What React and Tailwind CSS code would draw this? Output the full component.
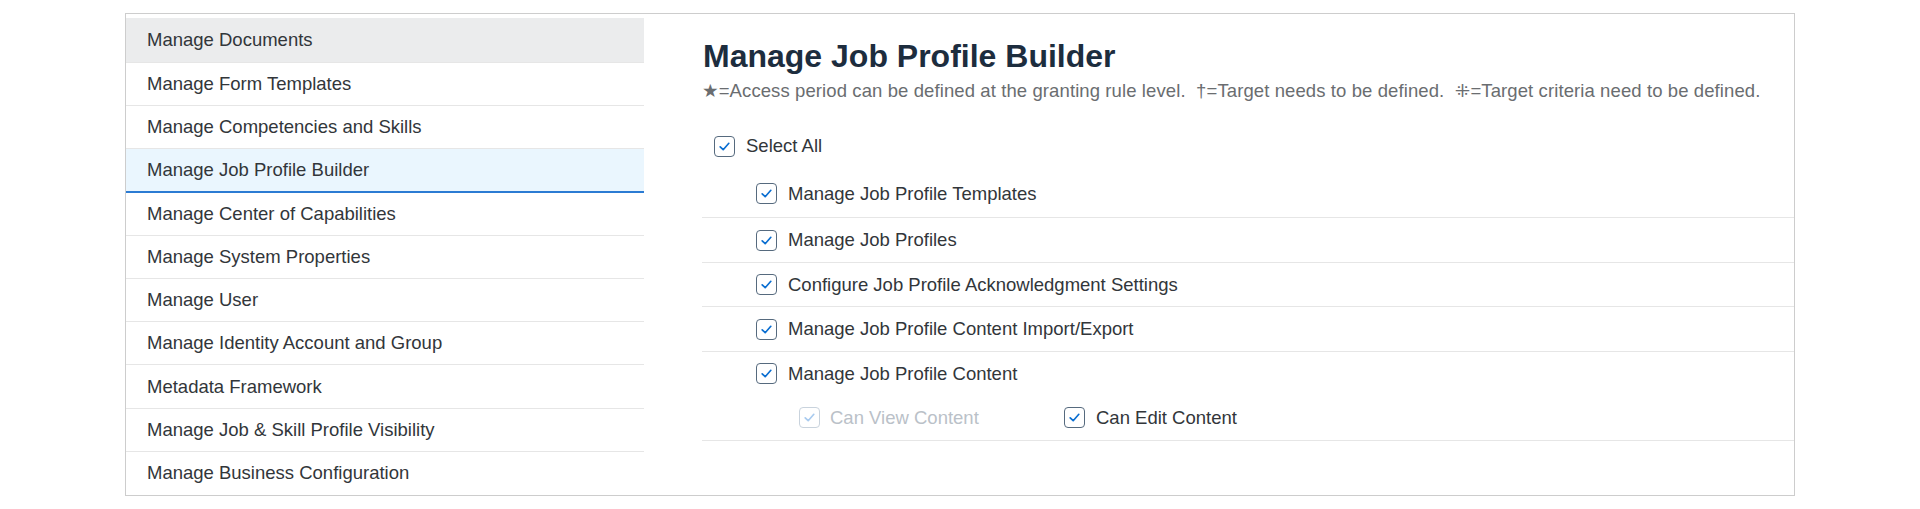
const NAV_ITEMS = [
  'Manage Documents',
  'Manage Form Templates',
  'Manage Competencies and Skills',
  'Manage Job Profile Builder',
  'Manage Center of Capabilities',
  'Manage System Properties',
  'Manage User',
  'Manage Identity Account and Group',
  'Metadata Framework',
  'Manage Job & Skill Profile Visibility',
  'Manage Business Configuration',
]

const PERMISSIONS = [
  'Manage Job Profile Templates',
  'Manage Job Profiles',
  'Configure Job Profile Acknowledgment Settings',
  'Manage Job Profile Content Import/Export',
]

function Checkbox({ disabled = false }) {
  return (
    <span
      className={`w-[21px] h-[21px] flex-shrink-0 rounded-[4px] border-[1.75px] bg-white flex items-center justify-center ${
        disabled ? 'border-[#c9d3dd]' : 'border-[#566a7e]'
      }`}
    >
      <svg width="15" height="15" viewBox="0 0 16 16" fill="none">
        <path
          d="M3.4 8.3 L6.6 11.4 L12.6 4.6"
          stroke={disabled ? '#a9cbef' : '#0a6ed1'}
          strokeWidth="1.8"
          strokeLinecap="round"
          strokeLinejoin="round"
        />
      </svg>
    </span>
  )
}

function Sidebar() {
  return (
    <nav className="w-[518px] flex-shrink-0 pt-[4px] flex flex-col">
      {NAV_ITEMS.map((label, i) => {
        const first = i === 0
        const active = label === 'Manage Job Profile Builder'
        const last = i === NAV_ITEMS.length - 1
        let cls = 'h-[43.2px] border-b border-[#e6e6e6]'
        if (first) cls = 'h-[45px] bg-[#ebeced] border-b border-[#e6e6e6]'
        if (active) cls = 'h-[43.2px] bg-[#eaf6fe] border-b-2 border-[#2b7bd3]'
        if (last) cls = 'h-[43.2px]'
        return (
          <div key={label} className={`${cls} flex items-center pl-[21px] text-[18.5px] text-[#32363a]`}>
            {label}
          </div>
        )
      })}
    </nav>
  )
}

function PermissionRow({ label, first = false }) {
  return (
    <div
      className={`border-b border-[#e6e6e6] flex items-center pl-[54px] gap-[11px] ${
        first ? 'h-[46.95px] pb-[2px]' : 'h-[44.45px]'
      }`}
    >
      <Checkbox />
      <span className="text-[18.5px] text-[#32363a]">{label}</span>
    </div>
  )
}

export default function App() {
  return (
    <div className="w-[1920px] h-[509px] bg-white pt-[13px] font-['Liberation_Sans','DejaVu_Sans','Noto_Sans',Arial,sans-serif]">
      <div className="ml-[125px] w-[1670px] h-[483px] border border-[#cdcdcd] flex">
        <Sidebar />

        <main className="flex-1 pl-[58px] pt-[22px]">
          <h1 className="text-[32px] leading-[40px] font-bold text-[#1d2d3e] pl-[1px]">Manage Job Profile Builder</h1>
          <p className="mt-[3px] text-[18.5px] leading-[24px] tracking-[0.1px] text-[#6a6d70] whitespace-pre">
            {'★=Access period can be defined at the granting rule level.  †=Target needs to be defined.  ⁜=Target criteria need to be defined.'}
          </p>

          <div className="mt-[21px] h-[44px] flex items-center pl-[12px] gap-[11px]">
            <Checkbox />
            <span className="text-[18.5px] text-[#32363a]">Select All</span>
          </div>

          <div className="mt-[3.5px]">
            {PERMISSIONS.map((p, i) => (
              <PermissionRow key={p} label={p} first={i === 0} />
            ))}

            {/* Manage Job Profile Content + sub permissions */}
            <div className="border-b border-[#e6e6e6]">
              <div className="h-[44.45px] flex items-center pl-[54px] gap-[11px]">
                <Checkbox />
                <span className="text-[18.5px] text-[#32363a]">Manage Job Profile Content</span>
              </div>
              <div className="h-[43.45px] flex items-center pl-[97px]">
                <div className="w-[265px] flex items-center gap-[10px]">
                  <Checkbox disabled />
                  <span className="text-[18.5px] text-[#bac1c8]">Can View Content</span>
                </div>
                <div className="flex items-center gap-[11px]">
                  <Checkbox />
                  <span className="text-[18.5px] text-[#32363a]">Can Edit Content</span>
                </div>
              </div>
            </div>
          </div>
        </main>
      </div>
    </div>
  )
}
